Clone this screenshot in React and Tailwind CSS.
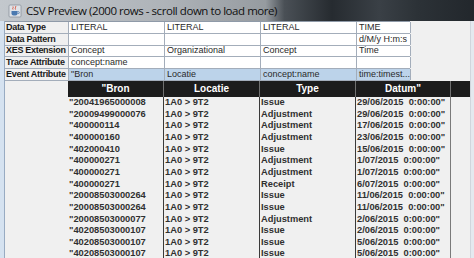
import React from "react";

const rows = [
  ['"20041965000008', "Issue", '29/06/2015  0:00:00"'],
  ['"20009499000076', "Adjustment", '29/06/2015  0:00:00"'],
  ['"400000114', "Adjustment", '17/06/2015  0:00:00"'],
  ['"400000160', "Adjustment", '23/06/2015  0:00:00"'],
  ['"402000410', "Issue", '15/06/2015  0:00:00"'],
  ['"400000271', "Adjustment", '1/07/2015  0:00:00"'],
  ['"400000271', "Adjustment", '1/07/2015  0:00:00"'],
  ['"400000271', "Receipt", '6/07/2015  0:00:00"'],
  ['"20008503000264', "Issue", '11/06/2015  0:00:00"'],
  ['"20008503000264', "Issue", '11/06/2015  0:00:00"'],
  ['"20008503000077', "Adjustment", '2/06/2015  0:00:00"'],
  ['"40208503000107', "Issue", '2/06/2015  0:00:00"'],
  ['"40208503000107', "Issue", '5/06/2015  0:00:00"'],
  ['"40208503000107', "Issue", '5/06/2015  0:00:00"'],
];

const meta = [
  { label: "Data Type", cells: ["LITERAL", "LITERAL", "LITERAL", "TIME"] },
  { label: "Data Pattern", cells: ["", "", "", "d/M/y H:m:s"] },
  { label: "XES Extension", cells: ["Concept", "Organizational", "Concept", "Time"] },
  { label: "Trace Attribute", cells: ["concept:name", "", "", ""] },
  { label: "Event Attribute", cells: ['"Bron', "Locatie", "concept:name", "time:timest..."], sel: true },
];

function JavaIcon() {
  return (
    <svg width="14" height="14" viewBox="0 0 14 14">
      <rect x="1" y="1" width="12" height="12" rx="1" fill="#dfe3e8" stroke="#8a939c" strokeWidth="0.8" />
      <path d="M5 2.5c1 1-1 1.5 0 3M7.5 2c1 1-1 1.8 0 3.5" stroke="#d2452b" strokeWidth="0.9" fill="none" />
      <path d="M3.5 7h6v2.5a2 2 0 0 1-2 2h-2a2 2 0 0 1-2-2z" fill="#4a79b0" />
      <path d="M9.5 7.6h0.8a1 1 0 0 1 0 2h-0.8" stroke="#4a79b0" strokeWidth="0.8" fill="none" />
    </svg>
  );
}

const bodyCell =
  "h-[11.65px] shrink-0 flex items-center pl-[1px] text-[9.3px] font-bold text-[#303030] leading-none whitespace-pre";

export default function App() {
  return (
    <div
      className="w-[474px] h-[258px] overflow-hidden flex flex-col bg-[#f0f0f0]"
      style={{ fontFamily: '"Liberation Sans", Arial, sans-serif' }}
    >
      {/* title bar */}
      <div className="h-[21px] shrink-0 flex items-center bg-[linear-gradient(to_right,#c3c8cd_0%,#aeb3b8_35%,#969ba0_56%,#4a5056_60%,#262b30_70%,#3a4046_80%,#2c3237_88%,#22272c_100%)]">
        <div className="w-[8px]" />
        <JavaIcon />
        <span
          className="ml-[4px] text-[11.5px] text-[#101010] tracking-[-0.45px] whitespace-nowrap"
          style={{ fontFamily: '"Open Sans", "Noto Sans", sans-serif' }}
        >
          CSV Preview (2000 rows - scroll down to load more)
        </span>
      </div>

      <div className="flex-1 flex min-h-0">
        {/* left frame */}
        <div className="w-[5px] bg-[#d5e2f0] border-r border-[#98abc2]" />

        <div className="flex-1 flex flex-col min-w-0 bg-[#f0f0f0]">
          {/* metadata table */}
          <div className="flex flex-col border-t border-[#8f9aa8] w-[405px]">
            {meta.map((m, i) => (
              <div key={i} className="flex h-[11.8px] border-b border-[#a3adba] items-center">
                <div className="w-[63px] shrink-0 pl-[1px] text-[9px] font-bold text-[#1a1a1a] tracking-[-0.3px] whitespace-nowrap leading-none">
                  {m.label}
                </div>
                {m.cells.map((c, j) => (
                  <div
                    key={j}
                    className={`${j === 3 ? "w-[54px]" : "w-[96px]"} h-full shrink-0 flex items-center pl-[2px] border-l border-[#a3adba] text-[9px] text-[#2a2a2a] whitespace-nowrap overflow-hidden leading-none ${m.sel ? "bg-[#bcd3ea]" : "bg-white"}`}
                  >
                    {c}
                  </div>
                ))}
                <div className="border-l border-[#a3adba] h-full" />
              </div>
            ))}
          </div>

          {/* data table header */}
          <div className="flex h-[16px]">
            <div className="w-[63px] shrink-0 bg-[#f0f0f0]" />
            <div className="flex-1 flex bg-[#1c1c1c]">
              {['"Bron', "Locatie", "Type", 'Datum"'].map((h, i) => (
                <div
                  key={i}
                  className={`${i === 3 ? "w-[95px]" : "w-[96px]"} shrink-0 flex items-center justify-center text-white font-bold text-[10px] border-r border-[#707070]`}
                >
                  {h}
                </div>
              ))}
            </div>
          </div>

          {/* data rows */}
          <div className="flex-1 flex overflow-hidden">
            <div className="w-[63px] shrink-0" />
            <div className="flex">
              <div className="w-[96px] border-r border-[#3a3a3a] flex flex-col">
                {rows.map((r, i) => (
                  <div key={i} className={bodyCell}>{r[0]}</div>
                ))}
              </div>
              <div className="w-[96px] border-r border-[#3a3a3a] flex flex-col">
                {rows.map((r, i) => (
                  <div key={i} className={bodyCell}>1A0 &gt; 9T2</div>
                ))}
              </div>
              <div className="w-[96px] border-r border-[#3a3a3a] flex flex-col">
                {rows.map((r, i) => (
                  <div key={i} className={bodyCell}>{r[1]}</div>
                ))}
              </div>
              <div className="w-[95px] border-r border-[#7a7a7a] flex flex-col">
                {rows.map((r, i) => (
                  <div key={i} className={bodyCell}>{r[2]}</div>
                ))}
              </div>
            </div>
          </div>
        </div>

        {/* right frame */}
        <div className="w-[4px] bg-[#e4e9ef] border-l border-[#d0d6dd]" />
      </div>
    </div>
  );
}
